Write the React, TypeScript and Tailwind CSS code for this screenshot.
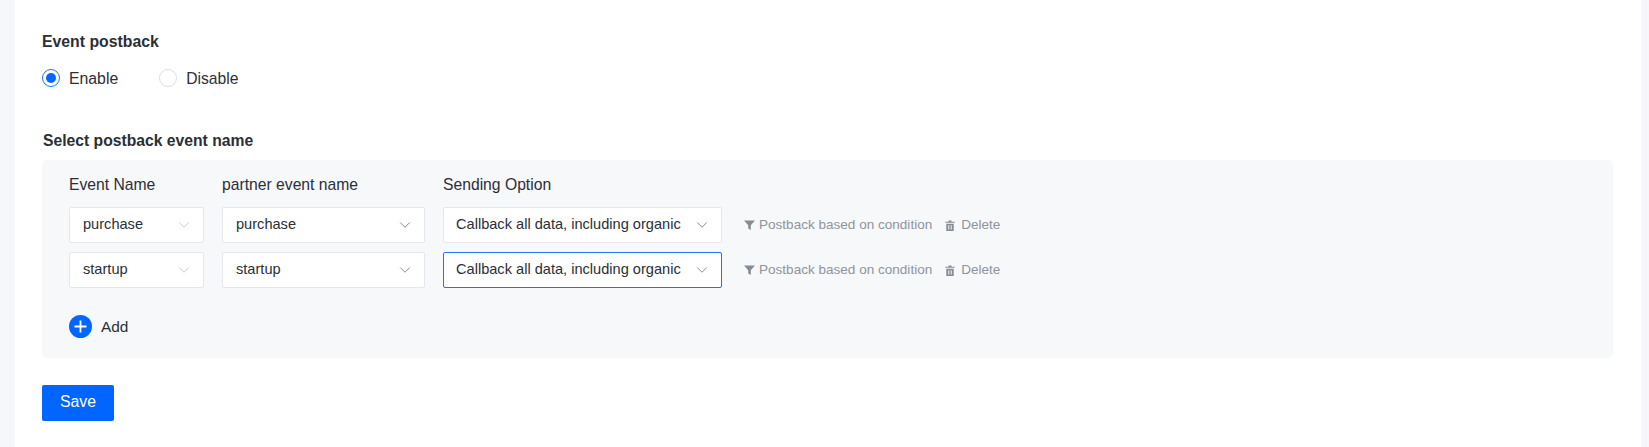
import { ChevronDown } from 'lucide-react';

const rows = [
  { name: 'purchase', focused: false },
  { name: 'startup', focused: true },
];

function Select({ value, width, focused, light, tight }: { value: string; width: string; focused?: boolean; light?: boolean; tight?: boolean }) {
  return (
    <div
      className={`${width} h-[36px] shrink-0 flex items-center justify-between ${tight ? 'pl-[12px]' : 'pl-[13px]'} pr-[10px] bg-white border rounded-[2px] ${
        focused ? 'border-[#1f75f5]' : 'border-[#e3e7ee]'
      }`}
    >
      <span className="text-[14.6px] text-[#2b2f36] whitespace-nowrap">{value}</span>
      <ChevronDown size={18} strokeWidth={1.25} className={light ? 'text-[#c4c8cf]' : 'text-[#7d828a]'} />
    </div>
  );
}

function FunnelIcon() {
  return (
    <svg width="11" height="10" viewBox="0 0 11 10" className="text-[#868b94]">
      <path d="M0 0.5h11L6.8 5.2V10L4.2 8.6V5.2z" fill="currentColor" />
    </svg>
  );
}

function TrashIcon() {
  return (
    <svg width="10" height="11" viewBox="0 0 10 11" className="text-[#868b94]">
      <path d="M3.5 0.5h3v1.2h3.2v1.1H0.3V1.7h3.2zM1.3 3.8h7.4V11H1.3zM3.3 5.3v4.2h1V5.3zM5.7 5.3v4.2h1V5.3z" fill="currentColor" fillRule="evenodd" />
    </svg>
  );
}

export default function App() {
  return (
    <div className="h-[447px] overflow-hidden bg-[#f6f7fa] pl-[15px] pr-[8px] font-['Liberation_Sans',Arial,sans-serif] text-[#2b2f36]">
      <div className="h-full bg-white pl-[27px] pr-[28px] pt-[33px]">
        {/* Enable / disable */}
        <p className="text-[15.8px] leading-[18px] font-bold">Event postback</p>
        <div className="flex items-center mt-[18px] h-[18px]">
          <span className="w-[18px] h-[18px] rounded-full border border-[#1f75f5] flex items-center justify-center">
            <span className="w-[10px] h-[10px] rounded-full bg-[#0066ff]" />
          </span>
          <span className="ml-[9px] pt-[2px] text-[15.8px]">Enable</span>
          <span className="ml-[41px] w-[18px] h-[18px] rounded-full border border-[#dcdfe4] bg-white" />
          <span className="ml-[9px] pt-[2px] text-[15.7px]">Disable</span>
        </div>

        <p className="mt-[45px] ml-[1px] text-[15.7px] leading-[18px] font-bold">Select postback event name</p>

        {/* Event table */}
        <div className="mt-[10px] h-[198px] bg-[#f7f8fa] rounded-[5px] pl-[27px] pt-[16px]">
          <div className="flex items-center h-[18px] text-[15.7px] leading-[18px]">
            <span className="w-[153px]">Event Name</span>
            <span className="w-[221px]">partner event name</span>
            <span>Sending Option</span>
          </div>
          <div className="mt-[13px] flex flex-col gap-[9px]">
            {rows.map((r) => (
              <div key={r.name} className="flex items-center">
                <Select value={r.name} width="w-[135px]" light />
                <div className="ml-[18px]">
                  <Select value={r.name} width="w-[203px]" />
                </div>
                <div className="ml-[18px]">
                  <Select value="Callback all data, including organic" width="w-[279px]" focused={r.focused} tight />
                </div>
                <div className="ml-[22px] flex items-center text-[13.55px] text-[#8f949c]">
                  <FunnelIcon />
                  <span className="ml-[4px]">Postback based on condition</span>
                  <span className="ml-[13px]"><TrashIcon /></span>
                  <span className="ml-[6px]">Delete</span>
                </div>
              </div>
            ))}
          </div>
          <div className="mt-[27px] flex items-center">
            <span className="w-[23px] h-[23px] rounded-full bg-[#0066ff] flex items-center justify-center">
              <svg width="13" height="13" viewBox="0 0 13 13">
                <path d="M6.5 0.5v12M0.5 6.5h12" stroke="#fff" strokeWidth="1.8" />
              </svg>
            </span>
            <span className="ml-[9px] text-[15.4px]">Add</span>
          </div>
        </div>

        <button className="mt-[27px] pb-[2px] w-[72px] h-[36px] bg-[#0066ff] rounded-[2px] text-white text-[15.8px]">Save</button>
      </div>
    </div>
  );
}
